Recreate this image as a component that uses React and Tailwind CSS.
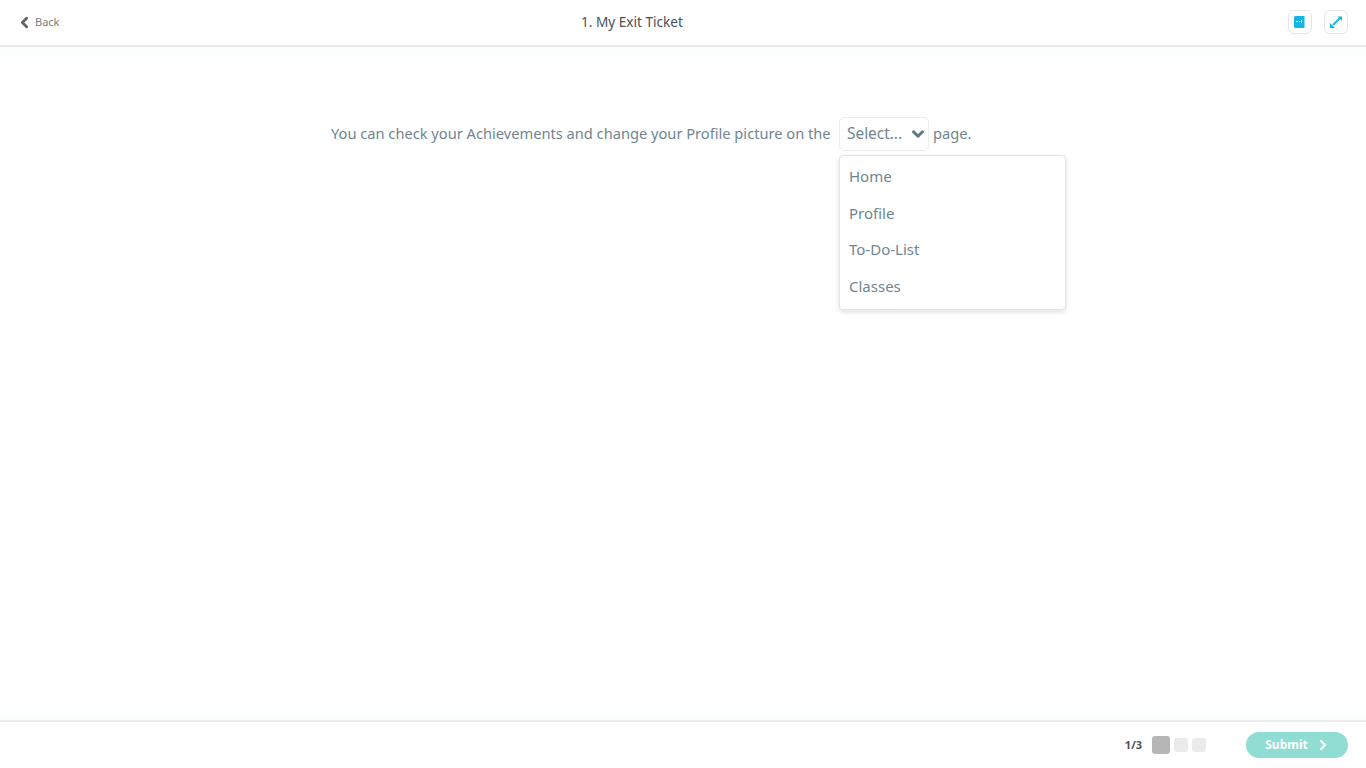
import React from 'react';
import { ChevronLeft, ChevronRight, ChevronDown } from 'lucide-react';

const options = ['Home', 'Profile', 'To-Do-List', 'Classes'];

function BookIcon() {
    return (
        <svg width="12" height="12" viewBox="0 0 12 12">
            <path fill="#12b5e5" d="M0 1.500A1.500 1.500 0 0 1 1.500 0H10.500v12H1.500A1.500 1.500 0 0 1 0 10.500z" />
            <rect x="2" y="5" width="2" height="1" fill="#fff" />
            <rect x="5" y="5" width="1" height="1" fill="#cdeffa" />
            <rect x="7" y="4" width="1" height="3" fill="#fff" />
        </svg>
    );
}

function ExpandIcon() {
    return (
        <svg width="12" height="12" viewBox="0 0 12 12" fill="#12b5e5">
            <path d="M7.500 0.500H12V5z" />
            <path d="M0 7v5h5z" />
            <path d="M3 9L9.500 2.500" stroke="#12b5e5" strokeWidth="1.800" />
        </svg>
    );
}

export default function App() {
    return (
        <div className="h-[768px] flex flex-col bg-white text-[#6f8691] font-['Noto_Sans',sans-serif] overflow-hidden">
            {/* Header */}
            <div className="h-[47px] shrink-0 flex items-center justify-between border-b-2 border-[#e8e8e8] pl-[16px] pr-[18px] relative">
                <div className="flex items-center gap-[2px] text-[11px] text-[#7d7d7d] pb-[1px]">
                    <ChevronLeft size={17} strokeWidth={4} className="text-[#666]" />
                    <span>Back</span>
                </div>
                <div className="absolute left-[581px] top-[12px] text-[13.6px] leading-[20px] text-[#4a4f55]">1. My Exit Ticket</div>
                <div className="flex items-center gap-[12px] pb-[2px]">
                    <button className="w-[24px] h-[24px] rounded-[6px] border border-[#e5e5e5] flex items-center justify-center">
                        <BookIcon />
                    </button>
                    <button className="w-[24px] h-[24px] rounded-[6px] border border-[#e5e5e5] flex items-center justify-center">
                        <ExpandIcon />
                    </button>
                </div>
            </div>

            {/* Question */}
            <div className="flex-1 bg-[linear-gradient(to_bottom,#f9fdfc,#ffffff_16px,#ffffff_calc(100%-14px),#fbfdfd)] pt-[70px] pl-[331px]">
                <div className="flex items-center text-[14.65px] h-[34px]">
                    <span className="w-[508px] whitespace-nowrap pb-[1px]">You can check your Achievements and change your Profile picture on the</span>
                    <div className="relative">
                        <div className="w-[90px] h-[34px] rounded-[5px] border border-[#ececec] flex items-center pl-[7px]">
                            <span className="flex-1 text-[15.4px] pb-[1px]">Select...</span>
                            <ChevronDown size={18} strokeWidth={4} className="mr-[1px] text-[#5f7a85]" />
                        </div>
                        <div className="absolute left-0 top-[38px] w-[227px] h-[155px] rounded-[4px] border border-[#e4e4e4] bg-white shadow-[0_2px_5px_rgba(0,0,0,0.12)] pt-[2px] text-[15px]">
                            {options.map((option) => (
                                <div key={option} className="h-[36.5px] flex items-center pl-[9px]">{option}</div>
                            ))}
                        </div>
                    </div>
                    <span className="ml-[4px] pb-[1px]">page.</span>
                </div>
            </div>

            {/* Footer */}
            <div className="h-[48px] shrink-0 border-t-2 border-[#ececec] flex items-center justify-end pr-[18px]">
                <span className="text-[11px] font-bold text-[#4a5260] mr-[10px]">1/3</span>
                <div className="w-[18px] h-[18px] rounded-[3px] bg-[#b6b6b6] mr-[4px]"></div>
                <div className="w-[14px] h-[14px] rounded-[3px] bg-[#ebebeb] mr-[4px]"></div>
                <div className="w-[14px] h-[14px] rounded-[3px] bg-[#ebebeb] mr-[40px]"></div>
                <button className="w-[102px] h-[26px] rounded-full bg-[#8fddd3] text-white text-[12px] font-bold flex items-center justify-center gap-[7px] pl-[2px]">
                    <span>Submit</span>
                    <ChevronRight size={16} strokeWidth={3.5} />
                </button>
            </div>
        </div>
    );
}
